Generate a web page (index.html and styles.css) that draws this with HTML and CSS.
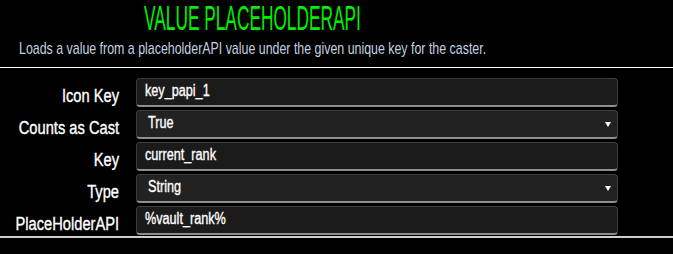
FILE: index.html
```html
<!DOCTYPE html>
<html lang="en">
<head>
<meta charset="utf-8">
<title>Value PlaceholderAPI</title>
<link rel="stylesheet" href="styles.css">
</head>
<body>
<header class="head">
  <h1 class="title"><span class="squeeze title-text">VALUE PLACEHOLDERAPI</span></h1>
  <p class="desc"><span class="squeeze desc-text">Loads a value from a placeholderAPI value under the given unique key for the caster.</span></p>
</header>
<form class="form">
  <label class="label"><span class="squeeze label-text">Icon Key</span></label>
  <div class="field"><span class="squeeze value">key_papi_1</span></div>

  <label class="label"><span class="squeeze label-text">Counts as Cast</span></label>
  <div class="field select"><span class="squeeze value">True</span><svg class="arrow" width="6" height="5" viewBox="0 0 6 5"><polygon points="0,0 6,0 3,5" fill="#fff"/></svg></div>

  <label class="label"><span class="squeeze label-text">Key</span></label>
  <div class="field"><span class="squeeze value">current_rank</span></div>

  <label class="label"><span class="squeeze label-text">Type</span></label>
  <div class="field select"><span class="squeeze value">String</span><svg class="arrow" width="6" height="5" viewBox="0 0 6 5"><polygon points="0,0 6,0 3,5" fill="#fff"/></svg></div>

  <label class="label"><span class="squeeze label-text">PlaceHolderAPI</span></label>
  <div class="field"><span class="squeeze value">%vault_rank%</span></div>
</form>
</body>
</html>
```

FILE: styles.css
```css
html, body {
  margin: 0;
  padding: 0;
  background: #000;
}
body {
  width: 673px;
  height: 254px;
  overflow: hidden;
  font-family: "Liberation Sans", Arial, sans-serif;
  color: #fff;
}
.squeeze {
  display: inline-block;
  white-space: nowrap;
}
.head {
  border-bottom: 1px solid #fff;
  padding-bottom: 8px;
}
.title {
  margin: 0;
  padding-left: 144px;
  font-size: 35px;
  line-height: 35px;
  font-weight: normal;
  color: #00f000;
}
.title-text {
  transform: scaleX(0.494);
  transform-origin: left center;
}
.desc {
  margin: 4px 0 0;
  padding-left: 19px;
  font-size: 17px;
  line-height: 20px;
  color: #c4d2e0;
}
.desc-text {
  transform: scaleX(0.729);
  transform-origin: left center;
}
.form {
  display: grid;
  grid-template-columns: 120px 482px;
  column-gap: 16px;
  row-gap: 3px;
  padding-top: 10px;
  padding-bottom: 1px;
  border-bottom: 2px solid #cfcfcf;
  width: 673px;
  box-sizing: border-box;
}
.label {
  display: flex;
  justify-content: flex-end;
  font-size: 18px;
  line-height: 29px;
  padding-top: 4px;
  padding-right: 1px;
  height: 29px;
  box-sizing: border-box;
}
.label-text {
  flex: none;
  transform: scaleX(0.815);
  transform-origin: right center;
  -webkit-text-stroke: 0.35px #fff;
}
.field {
  height: 29px;
  box-sizing: border-box;
  background: #1b1b1b;
  border: 1px solid #3c3c3c;
  border-bottom: 2px solid #8e8e8e;
  border-radius: 4px;
  padding: 0 8px;
  display: flex;
  align-items: center;
  font-size: 16px;
  line-height: 20px;
}
.select {
  background: #222;
  padding: 0 6px 0 11px;
  justify-content: space-between;
}
.value {
  transform: scaleX(0.79);
  transform-origin: left center;
  margin-top: -3px;
  -webkit-text-stroke: 0.35px #fff;
}
.arrow {
  display: block;
}
```
